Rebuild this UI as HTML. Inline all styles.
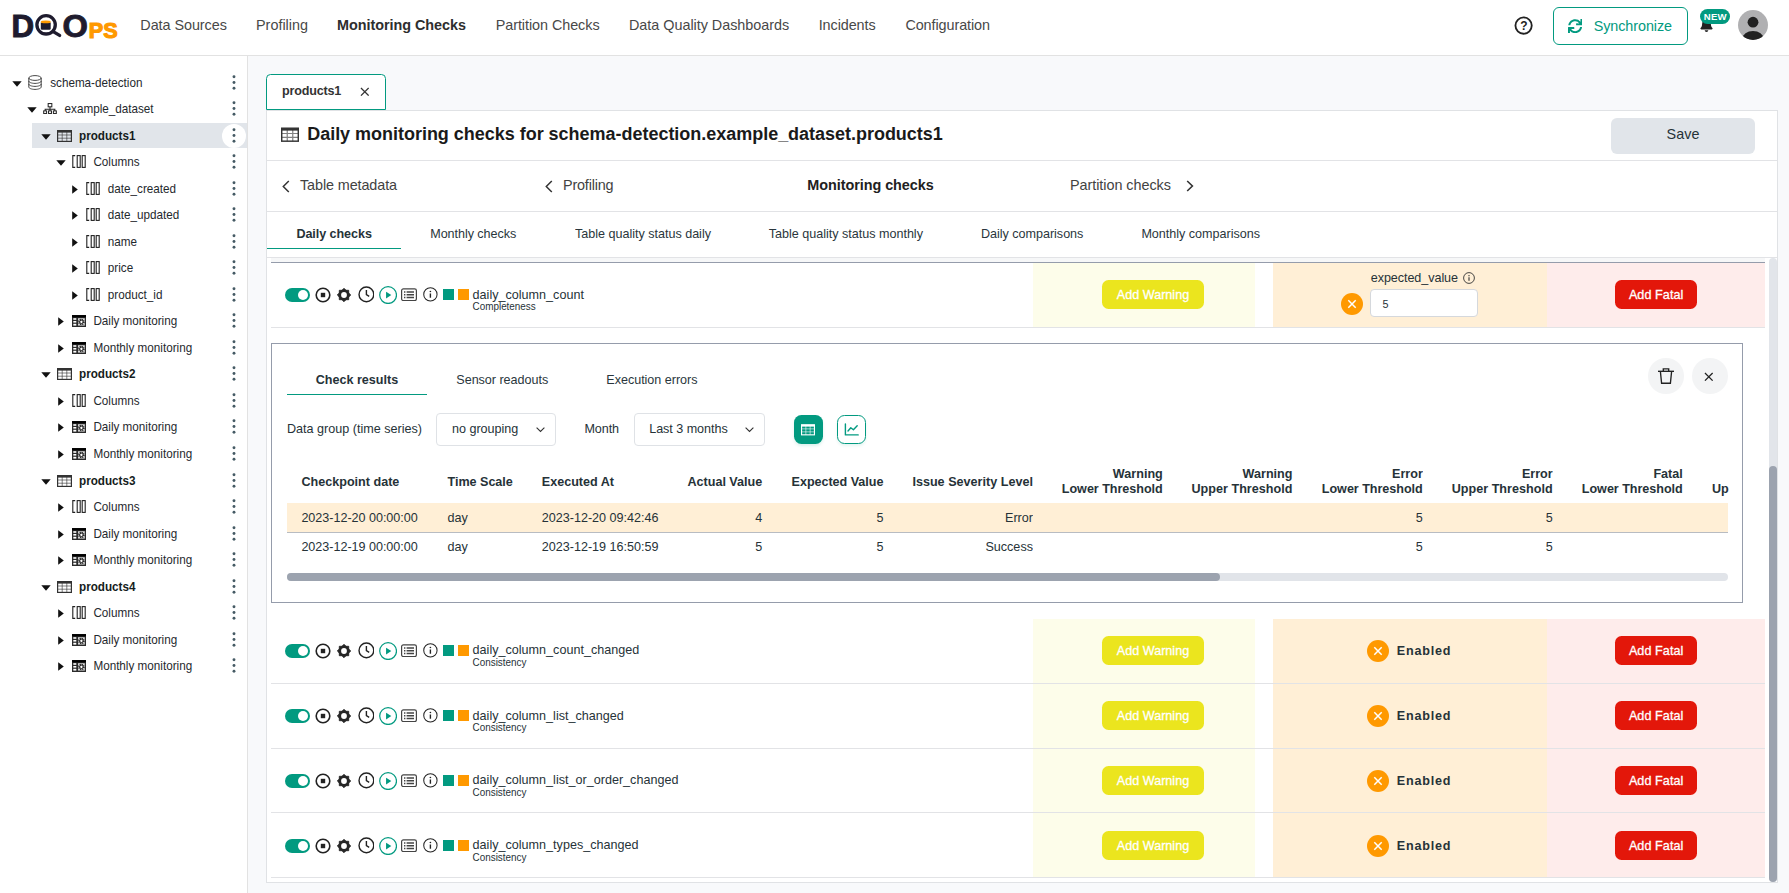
<!DOCTYPE html>
<html lang="en"><head><meta charset="utf-8"><title>DQOps</title>
<style>
html,body{margin:0;padding:0;}
body{width:1789px;height:893px;overflow:hidden;position:relative;background:#fff;font-family:"Liberation Sans",sans-serif;}
.b{position:absolute;box-sizing:border-box;display:block;}
.t{position:absolute;white-space:nowrap;display:block;}
</style></head><body>
<header>
<div class="b " style="left:0.00px;top:0.00px;width:1789.00px;height:56.00px;background:#fff;border-bottom:1px solid #e2e2e2;"></div>
<svg class="b" style="left:0;top:0" width="130" height="55" viewBox="0 0 130 55"><g font-family="Liberation Sans, sans-serif" font-weight="700"><text x="11.4" y="36.8" font-size="31.4" fill="#1e1b2e" stroke="#1e1b2e" stroke-width="1.0" textLength="22.6" lengthAdjust="spacingAndGlyphs">D</text><text x="62.4" y="36.9" font-size="31.4" fill="#1e1b2e" stroke="#1e1b2e" stroke-width="0.9" textLength="25.4" lengthAdjust="spacingAndGlyphs">O</text><text x="88.8" y="37.6" font-size="22.4" fill="#ff9900" stroke="#ff9900" stroke-width="1.2" textLength="28.8" lengthAdjust="spacingAndGlyphs">PS</text></g><circle cx="46.1" cy="24.8" r="9.2" fill="none" stroke="#1e1b2e" stroke-width="3.3"/><path d="M53.2 31.6L59.6 35.4" stroke="#1e1b2e" stroke-width="3.4" stroke-linecap="round"/><path d="M40.8 22.4h9.9v6.2a1.2 1.2 0 0 1-1.2 1.2h-7.5a1.2 1.2 0 0 1-1.2-1.2z" fill="#1e1b2e"/><ellipse cx="45.75" cy="21.9" rx="5" ry="1.4" fill="#ff9900"/></svg>
<span class="t" style="left:140.30px;top:15px;font-size:14.4px;line-height:20px;height:20px;color:#484848;letter-spacing:-0.054px;">Data Sources</span>
<span class="t" style="left:256.00px;top:15px;font-size:14.4px;line-height:20px;height:20px;color:#484848;">Profiling</span>
<span class="t" style="left:337.00px;top:15px;font-size:14.4px;line-height:20px;height:20px;color:#2e2e2e;font-weight:700;letter-spacing:-0.036px;">Monitoring Checks</span>
<span class="t" style="left:495.70px;top:15px;font-size:14.4px;line-height:20px;height:20px;color:#484848;letter-spacing:-0.059px;">Partition Checks</span>
<span class="t" style="left:629.00px;top:15px;font-size:14.4px;line-height:20px;height:20px;color:#484848;letter-spacing:-0.025px;">Data Quality Dashboards</span>
<span class="t" style="left:818.70px;top:15px;font-size:14.4px;line-height:20px;height:20px;color:#484848;letter-spacing:-0.082px;">Incidents</span>
<span class="t" style="left:905.40px;top:15px;font-size:14.4px;line-height:20px;height:20px;color:#484848;letter-spacing:-0.081px;">Configuration</span>
<svg class="b" style="left:1514.40px;top:15.50px;" width="19.2" height="19.2" viewBox="0 0 24 24"><circle cx="12" cy="12" r="10.2" fill="none" stroke="#222" stroke-width="2.3"/><text x="12.3" y="17.7" font-family="Liberation Sans, sans-serif" font-weight="700" font-size="15" text-anchor="middle" fill="#222">?</text></svg>
<div class="b " style="left:1553.00px;top:7.00px;width:135.00px;height:38.00px;border:1px solid #029a80;border-radius:6px;background:#fff;"></div>
<svg class="b" style="left:1568.00px;top:18.60px;" width="14.4" height="14.4" viewBox="0 0 512 512"><path fill="#029a80" d="M440.65 12.57l4 82.77A247.16 247.16 0 0 0 255.83 8C134.73 8 33.91 94.92 12.29 209.82A12 12 0 0 0 24.09 224h49.05a12 12 0 0 0 11.67-9.26 175.91 175.91 0 0 1 317-56.94l-101.46-4.86a12 12 0 0 0-12.57 12v47.41a12 12 0 0 0 12 12H500a12 12 0 0 0 12-12V12a12 12 0 0 0-12-12h-47.37a12 12 0 0 0-11.98 12.57zM255.83 432a175.61 175.61 0 0 1-146-77.8l101.8 4.87a12 12 0 0 0 12.57-12v-47.4a12 12 0 0 0-12-12H12a12 12 0 0 0-12 12V500a12 12 0 0 0 12 12h47.35a12 12 0 0 0 12-12.6l-4.15-82.57A247.17 247.17 0 0 0 255.83 504c121.11 0 221.93-86.92 243.55-201.82a12 12 0 0 0-11.8-14.18h-49.05a12 12 0 0 0-11.67 9.26A175.86 175.86 0 0 1 255.83 432z"/></svg>
<span class="t" style="left:1593.70px;top:16px;font-size:14.4px;line-height:20px;height:20px;color:#029a80;letter-spacing:-0.086px;">Synchronize</span>
<svg class="b" style="left:1699.50px;top:18.00px;" width="13" height="14" viewBox="0 0 448 512"><path fill="#222" d="M224 512c35.32 0 63.97-28.65 63.97-64H160.03c0 35.35 28.65 64 63.97 64zm215.39-149.71c-19.32-20.76-55.47-51.99-55.47-154.29 0-77.7-54.48-139.9-127.94-155.16V32c0-17.67-14.32-32-31.98-32s-31.98 14.33-31.98 32v20.84C118.56 68.1 64.08 130.3 64.08 208c0 102.3-36.15 133.53-55.47 154.29-6 6.45-8.66 14.16-8.61 21.71.11 16.4 12.98 32 32.1 32h383.8c19.12 0 32-15.6 32.1-32 .05-7.55-2.61-15.27-8.61-21.71z"/></svg>
<div class="b " style="left:1700.30px;top:8.80px;width:30.00px;height:15.00px;background:#029a80;border-radius:8px;"></div>
<span class="t" style="left:1703.80px;top:9px;font-size:9.6px;line-height:15px;height:15px;color:#fff;font-weight:700;letter-spacing:0.201px;">NEW</span>
<svg class="b" style="left:1738.00px;top:9.70px;" width="30" height="30" viewBox="0 0 30 30"><defs><clipPath id="av"><circle cx="15" cy="15" r="15"/></clipPath></defs><g clip-path="url(#av)"><rect width="30" height="30" fill="#b0b0b2"/><circle cx="15" cy="12.2" r="5.4" fill="#212121"/><ellipse cx="15" cy="28.5" rx="10.6" ry="7.6" fill="#212121"/></g></svg>
</header>
<aside>
<div class="b " style="left:0.00px;top:56.00px;width:248.00px;height:837.00px;background:#fff;border-right:1px solid #e2e2e2;"></div>
<svg class="b" style="left:12.20px;top:80.50px;" width="10" height="6" viewBox="0 0 10 6"><path d="M0.3 0.2h9.4L5 5.8z" fill="#111"/></svg>
<svg class="b" style="left:28.00px;top:75.00px;" width="14" height="15" viewBox="0 0 14 15"><g fill="none" stroke="#333" stroke-width="0.9"><ellipse cx="7" cy="3" rx="6.2" ry="2.4"/><path d="M0.8 3v9c0 1.3 2.8 2.4 6.2 2.4s6.2-1.1 6.2-2.4V3"/><path d="M0.8 6c0 1.3 2.8 2.4 6.2 2.4s6.2-1.1 6.2-2.4"/><path d="M0.8 9c0 1.3 2.8 2.4 6.2 2.4s6.2-1.1 6.2-2.4"/></g></svg>
<span class="t" style="left:50.20px;top:74px;font-size:11.7px;line-height:17px;height:17px;color:#1f292e;transform:scaleY(1.05);transform-origin:0 13px;">schema-detection</span>
<svg class="b" style="left:232.00px;top:75.00px;" width="4" height="15" viewBox="0 0 4 15"><g fill="#455a64"><circle cx="2" cy="1.8" r="1.45"/><circle cx="2" cy="7.5" r="1.45"/><circle cx="2" cy="13.2" r="1.45"/></g></svg>
<svg class="b" style="left:27.20px;top:106.50px;" width="10" height="6" viewBox="0 0 10 6"><path d="M0.3 0.2h9.4L5 5.8z" fill="#111"/></svg>
<svg class="b" style="left:43.00px;top:103.00px;" width="14" height="11" viewBox="0 0 15 12"><g fill="none" stroke="#222" stroke-width="1.1"><rect x="5.5" y="0.6" width="4" height="3.6"/><path d="M7.5 4.2v2.6M2.2 8.6V6.8h10.6v1.8M7.5 6.8v1.8"/><rect x="0.6" y="8.6" width="3.2" height="2.8"/><rect x="5.9" y="8.6" width="3.2" height="2.8"/><rect x="11.2" y="8.6" width="3.2" height="2.8"/></g></svg>
<span class="t" style="left:64.60px;top:100px;font-size:11.7px;line-height:17px;height:17px;color:#1f292e;transform:scaleY(1.05);transform-origin:0 13px;">example_dataset</span>
<svg class="b" style="left:232.00px;top:101.00px;" width="4" height="15" viewBox="0 0 4 15"><g fill="#455a64"><circle cx="2" cy="1.8" r="1.45"/><circle cx="2" cy="7.5" r="1.45"/><circle cx="2" cy="13.2" r="1.45"/></g></svg>
<div class="b " style="left:32.20px;top:123.00px;width:214.80px;height:24.60px;background:#e1e5ea;"></div>
<div class="b " style="left:222.00px;top:123.50px;width:24.00px;height:24.00px;background:#fff;border-radius:50%;"></div>
<svg class="b" style="left:41.30px;top:133.50px;" width="10" height="6" viewBox="0 0 10 6"><path d="M0.3 0.2h9.4L5 5.8z" fill="#111"/></svg>
<svg class="b" style="left:57.00px;top:129.50px;" width="15" height="12" viewBox="0 0 15 12"><g fill="none" stroke="#333"><rect x="0.6" y="0.6" width="13.8" height="10.8" stroke-width="1.2"/><path d="M0.6 1.6h13.8" stroke-width="2"/><path d="M0.6 5h13.8M0.6 8.2h13.8M5.2 2v9.4M9.8 2v9.4" stroke-width="1" opacity="0.62"/></g></svg>
<span class="t" style="left:79.00px;top:127px;font-size:11.7px;line-height:17px;height:17px;color:#151c20;font-weight:700;transform:scaleY(1.05);transform-origin:0 13px;">products1</span>
<svg class="b" style="left:232.00px;top:128.00px;" width="4" height="15" viewBox="0 0 4 15"><g fill="#455a64"><circle cx="2" cy="1.8" r="1.45"/><circle cx="2" cy="7.5" r="1.45"/><circle cx="2" cy="13.2" r="1.45"/></g></svg>
<svg class="b" style="left:56.20px;top:159.50px;" width="10" height="6" viewBox="0 0 10 6"><path d="M0.3 0.2h9.4L5 5.8z" fill="#111"/></svg>
<svg class="b" style="left:71.80px;top:154.70px;" width="14" height="13" viewBox="0 0 14 13"><g fill="none" stroke="#222" stroke-width="1.1"><path d="M3.2 0.6H0.8v11.8h2.4"/><rect x="5.2" y="0.6" width="3" height="11.8"/><rect x="10.2" y="0.6" width="3" height="11.8"/></g></svg>
<span class="t" style="left:93.40px;top:153px;font-size:11.7px;line-height:17px;height:17px;color:#1f292e;transform:scaleY(1.05);transform-origin:0 13px;">Columns</span>
<svg class="b" style="left:232.00px;top:154.00px;" width="4" height="15" viewBox="0 0 4 15"><g fill="#455a64"><circle cx="2" cy="1.8" r="1.45"/><circle cx="2" cy="7.5" r="1.45"/><circle cx="2" cy="13.2" r="1.45"/></g></svg>
<svg class="b" style="left:72.20px;top:184.60px;" width="6" height="9" viewBox="0 0 6 9"><path d="M0.2 0.2v8.6L5.8 4.5z" fill="#111"/></svg>
<svg class="b" style="left:86.20px;top:181.70px;" width="14" height="13" viewBox="0 0 14 13"><g fill="none" stroke="#222" stroke-width="1.1"><path d="M3.2 0.6H0.8v11.8h2.4"/><rect x="5.2" y="0.6" width="3" height="11.8"/><rect x="10.2" y="0.6" width="3" height="11.8"/></g></svg>
<span class="t" style="left:107.80px;top:180px;font-size:11.7px;line-height:17px;height:17px;color:#1f292e;transform:scaleY(1.05);transform-origin:0 13px;">date_created</span>
<svg class="b" style="left:232.00px;top:181.00px;" width="4" height="15" viewBox="0 0 4 15"><g fill="#455a64"><circle cx="2" cy="1.8" r="1.45"/><circle cx="2" cy="7.5" r="1.45"/><circle cx="2" cy="13.2" r="1.45"/></g></svg>
<svg class="b" style="left:72.20px;top:210.60px;" width="6" height="9" viewBox="0 0 6 9"><path d="M0.2 0.2v8.6L5.8 4.5z" fill="#111"/></svg>
<svg class="b" style="left:86.20px;top:207.70px;" width="14" height="13" viewBox="0 0 14 13"><g fill="none" stroke="#222" stroke-width="1.1"><path d="M3.2 0.6H0.8v11.8h2.4"/><rect x="5.2" y="0.6" width="3" height="11.8"/><rect x="10.2" y="0.6" width="3" height="11.8"/></g></svg>
<span class="t" style="left:107.80px;top:206px;font-size:11.7px;line-height:17px;height:17px;color:#1f292e;transform:scaleY(1.05);transform-origin:0 13px;">date_updated</span>
<svg class="b" style="left:232.00px;top:207.00px;" width="4" height="15" viewBox="0 0 4 15"><g fill="#455a64"><circle cx="2" cy="1.8" r="1.45"/><circle cx="2" cy="7.5" r="1.45"/><circle cx="2" cy="13.2" r="1.45"/></g></svg>
<svg class="b" style="left:72.20px;top:237.60px;" width="6" height="9" viewBox="0 0 6 9"><path d="M0.2 0.2v8.6L5.8 4.5z" fill="#111"/></svg>
<svg class="b" style="left:86.20px;top:234.70px;" width="14" height="13" viewBox="0 0 14 13"><g fill="none" stroke="#222" stroke-width="1.1"><path d="M3.2 0.6H0.8v11.8h2.4"/><rect x="5.2" y="0.6" width="3" height="11.8"/><rect x="10.2" y="0.6" width="3" height="11.8"/></g></svg>
<span class="t" style="left:107.80px;top:233px;font-size:11.7px;line-height:17px;height:17px;color:#1f292e;transform:scaleY(1.05);transform-origin:0 13px;">name</span>
<svg class="b" style="left:232.00px;top:234.00px;" width="4" height="15" viewBox="0 0 4 15"><g fill="#455a64"><circle cx="2" cy="1.8" r="1.45"/><circle cx="2" cy="7.5" r="1.45"/><circle cx="2" cy="13.2" r="1.45"/></g></svg>
<svg class="b" style="left:72.20px;top:263.60px;" width="6" height="9" viewBox="0 0 6 9"><path d="M0.2 0.2v8.6L5.8 4.5z" fill="#111"/></svg>
<svg class="b" style="left:86.20px;top:260.70px;" width="14" height="13" viewBox="0 0 14 13"><g fill="none" stroke="#222" stroke-width="1.1"><path d="M3.2 0.6H0.8v11.8h2.4"/><rect x="5.2" y="0.6" width="3" height="11.8"/><rect x="10.2" y="0.6" width="3" height="11.8"/></g></svg>
<span class="t" style="left:107.80px;top:259px;font-size:11.7px;line-height:17px;height:17px;color:#1f292e;transform:scaleY(1.05);transform-origin:0 13px;">price</span>
<svg class="b" style="left:232.00px;top:260.00px;" width="4" height="15" viewBox="0 0 4 15"><g fill="#455a64"><circle cx="2" cy="1.8" r="1.45"/><circle cx="2" cy="7.5" r="1.45"/><circle cx="2" cy="13.2" r="1.45"/></g></svg>
<svg class="b" style="left:72.20px;top:290.60px;" width="6" height="9" viewBox="0 0 6 9"><path d="M0.2 0.2v8.6L5.8 4.5z" fill="#111"/></svg>
<svg class="b" style="left:86.20px;top:287.70px;" width="14" height="13" viewBox="0 0 14 13"><g fill="none" stroke="#222" stroke-width="1.1"><path d="M3.2 0.6H0.8v11.8h2.4"/><rect x="5.2" y="0.6" width="3" height="11.8"/><rect x="10.2" y="0.6" width="3" height="11.8"/></g></svg>
<span class="t" style="left:107.80px;top:286px;font-size:11.7px;line-height:17px;height:17px;color:#1f292e;transform:scaleY(1.05);transform-origin:0 13px;">product_id</span>
<svg class="b" style="left:232.00px;top:287.00px;" width="4" height="15" viewBox="0 0 4 15"><g fill="#455a64"><circle cx="2" cy="1.8" r="1.45"/><circle cx="2" cy="7.5" r="1.45"/><circle cx="2" cy="13.2" r="1.45"/></g></svg>
<svg class="b" style="left:58.20px;top:316.60px;" width="6" height="9" viewBox="0 0 6 9"><path d="M0.2 0.2v8.6L5.8 4.5z" fill="#111"/></svg>
<svg class="b" style="left:72.00px;top:314.80px;" width="14" height="12.2" viewBox="0 0 14 12"><rect x="0" y="0" width="14" height="12" fill="#2b2b2b"/><rect x="0" y="0" width="14" height="2.3" fill="#000"/><g fill="#fff"><rect x="1.3" y="3.1" width="3" height="1.6"/><rect x="1.3" y="5.9" width="3" height="1.6"/><rect x="1.3" y="8.7" width="3" height="1.8"/><rect x="6" y="3.1" width="6.8" height="7.4" opacity="0.8"/></g><circle cx="9.4" cy="6.8" r="2.5" fill="none" stroke="#1a1a1a" stroke-width="1.5" stroke-dasharray="1.1 0.86"/><circle cx="9.4" cy="6.8" r="1.7" fill="#fff" stroke="#1a1a1a" stroke-width="1"/></svg>
<span class="t" style="left:93.40px;top:312px;font-size:11.7px;line-height:17px;height:17px;color:#1f292e;transform:scaleY(1.05);transform-origin:0 13px;">Daily monitoring</span>
<svg class="b" style="left:232.00px;top:313.00px;" width="4" height="15" viewBox="0 0 4 15"><g fill="#455a64"><circle cx="2" cy="1.8" r="1.45"/><circle cx="2" cy="7.5" r="1.45"/><circle cx="2" cy="13.2" r="1.45"/></g></svg>
<svg class="b" style="left:58.20px;top:343.60px;" width="6" height="9" viewBox="0 0 6 9"><path d="M0.2 0.2v8.6L5.8 4.5z" fill="#111"/></svg>
<svg class="b" style="left:72.00px;top:341.80px;" width="14" height="12.2" viewBox="0 0 14 12"><rect x="0" y="0" width="14" height="12" fill="#2b2b2b"/><rect x="0" y="0" width="14" height="2.3" fill="#000"/><g fill="#fff"><rect x="1.3" y="3.1" width="3" height="1.6"/><rect x="1.3" y="5.9" width="3" height="1.6"/><rect x="1.3" y="8.7" width="3" height="1.8"/><rect x="6" y="3.1" width="6.8" height="7.4" opacity="0.8"/></g><circle cx="9.4" cy="6.8" r="2.5" fill="none" stroke="#1a1a1a" stroke-width="1.5" stroke-dasharray="1.1 0.86"/><circle cx="9.4" cy="6.8" r="1.7" fill="#fff" stroke="#1a1a1a" stroke-width="1"/></svg>
<span class="t" style="left:93.40px;top:339px;font-size:11.7px;line-height:17px;height:17px;color:#1f292e;transform:scaleY(1.05);transform-origin:0 13px;">Monthly monitoring</span>
<svg class="b" style="left:232.00px;top:340.00px;" width="4" height="15" viewBox="0 0 4 15"><g fill="#455a64"><circle cx="2" cy="1.8" r="1.45"/><circle cx="2" cy="7.5" r="1.45"/><circle cx="2" cy="13.2" r="1.45"/></g></svg>
<svg class="b" style="left:41.30px;top:371.50px;" width="10" height="6" viewBox="0 0 10 6"><path d="M0.3 0.2h9.4L5 5.8z" fill="#111"/></svg>
<svg class="b" style="left:57.00px;top:367.50px;" width="15" height="12" viewBox="0 0 15 12"><g fill="none" stroke="#333"><rect x="0.6" y="0.6" width="13.8" height="10.8" stroke-width="1.2"/><path d="M0.6 1.6h13.8" stroke-width="2"/><path d="M0.6 5h13.8M0.6 8.2h13.8M5.2 2v9.4M9.8 2v9.4" stroke-width="1" opacity="0.62"/></g></svg>
<span class="t" style="left:79.00px;top:365px;font-size:11.7px;line-height:17px;height:17px;color:#151c20;font-weight:700;transform:scaleY(1.05);transform-origin:0 13px;">products2</span>
<svg class="b" style="left:232.00px;top:366.00px;" width="4" height="15" viewBox="0 0 4 15"><g fill="#455a64"><circle cx="2" cy="1.8" r="1.45"/><circle cx="2" cy="7.5" r="1.45"/><circle cx="2" cy="13.2" r="1.45"/></g></svg>
<svg class="b" style="left:58.20px;top:396.60px;" width="6" height="9" viewBox="0 0 6 9"><path d="M0.2 0.2v8.6L5.8 4.5z" fill="#111"/></svg>
<svg class="b" style="left:71.80px;top:393.70px;" width="14" height="13" viewBox="0 0 14 13"><g fill="none" stroke="#222" stroke-width="1.1"><path d="M3.2 0.6H0.8v11.8h2.4"/><rect x="5.2" y="0.6" width="3" height="11.8"/><rect x="10.2" y="0.6" width="3" height="11.8"/></g></svg>
<span class="t" style="left:93.40px;top:392px;font-size:11.7px;line-height:17px;height:17px;color:#1f292e;transform:scaleY(1.05);transform-origin:0 13px;">Columns</span>
<svg class="b" style="left:232.00px;top:393.00px;" width="4" height="15" viewBox="0 0 4 15"><g fill="#455a64"><circle cx="2" cy="1.8" r="1.45"/><circle cx="2" cy="7.5" r="1.45"/><circle cx="2" cy="13.2" r="1.45"/></g></svg>
<svg class="b" style="left:58.20px;top:422.60px;" width="6" height="9" viewBox="0 0 6 9"><path d="M0.2 0.2v8.6L5.8 4.5z" fill="#111"/></svg>
<svg class="b" style="left:72.00px;top:420.80px;" width="14" height="12.2" viewBox="0 0 14 12"><rect x="0" y="0" width="14" height="12" fill="#2b2b2b"/><rect x="0" y="0" width="14" height="2.3" fill="#000"/><g fill="#fff"><rect x="1.3" y="3.1" width="3" height="1.6"/><rect x="1.3" y="5.9" width="3" height="1.6"/><rect x="1.3" y="8.7" width="3" height="1.8"/><rect x="6" y="3.1" width="6.8" height="7.4" opacity="0.8"/></g><circle cx="9.4" cy="6.8" r="2.5" fill="none" stroke="#1a1a1a" stroke-width="1.5" stroke-dasharray="1.1 0.86"/><circle cx="9.4" cy="6.8" r="1.7" fill="#fff" stroke="#1a1a1a" stroke-width="1"/></svg>
<span class="t" style="left:93.40px;top:418px;font-size:11.7px;line-height:17px;height:17px;color:#1f292e;transform:scaleY(1.05);transform-origin:0 13px;">Daily monitoring</span>
<svg class="b" style="left:232.00px;top:419.00px;" width="4" height="15" viewBox="0 0 4 15"><g fill="#455a64"><circle cx="2" cy="1.8" r="1.45"/><circle cx="2" cy="7.5" r="1.45"/><circle cx="2" cy="13.2" r="1.45"/></g></svg>
<svg class="b" style="left:58.20px;top:449.60px;" width="6" height="9" viewBox="0 0 6 9"><path d="M0.2 0.2v8.6L5.8 4.5z" fill="#111"/></svg>
<svg class="b" style="left:72.00px;top:447.80px;" width="14" height="12.2" viewBox="0 0 14 12"><rect x="0" y="0" width="14" height="12" fill="#2b2b2b"/><rect x="0" y="0" width="14" height="2.3" fill="#000"/><g fill="#fff"><rect x="1.3" y="3.1" width="3" height="1.6"/><rect x="1.3" y="5.9" width="3" height="1.6"/><rect x="1.3" y="8.7" width="3" height="1.8"/><rect x="6" y="3.1" width="6.8" height="7.4" opacity="0.8"/></g><circle cx="9.4" cy="6.8" r="2.5" fill="none" stroke="#1a1a1a" stroke-width="1.5" stroke-dasharray="1.1 0.86"/><circle cx="9.4" cy="6.8" r="1.7" fill="#fff" stroke="#1a1a1a" stroke-width="1"/></svg>
<span class="t" style="left:93.40px;top:445px;font-size:11.7px;line-height:17px;height:17px;color:#1f292e;transform:scaleY(1.05);transform-origin:0 13px;">Monthly monitoring</span>
<svg class="b" style="left:232.00px;top:446.00px;" width="4" height="15" viewBox="0 0 4 15"><g fill="#455a64"><circle cx="2" cy="1.8" r="1.45"/><circle cx="2" cy="7.5" r="1.45"/><circle cx="2" cy="13.2" r="1.45"/></g></svg>
<svg class="b" style="left:41.30px;top:478.50px;" width="10" height="6" viewBox="0 0 10 6"><path d="M0.3 0.2h9.4L5 5.8z" fill="#111"/></svg>
<svg class="b" style="left:57.00px;top:474.50px;" width="15" height="12" viewBox="0 0 15 12"><g fill="none" stroke="#333"><rect x="0.6" y="0.6" width="13.8" height="10.8" stroke-width="1.2"/><path d="M0.6 1.6h13.8" stroke-width="2"/><path d="M0.6 5h13.8M0.6 8.2h13.8M5.2 2v9.4M9.8 2v9.4" stroke-width="1" opacity="0.62"/></g></svg>
<span class="t" style="left:79.00px;top:472px;font-size:11.7px;line-height:17px;height:17px;color:#151c20;font-weight:700;transform:scaleY(1.05);transform-origin:0 13px;">products3</span>
<svg class="b" style="left:232.00px;top:473.00px;" width="4" height="15" viewBox="0 0 4 15"><g fill="#455a64"><circle cx="2" cy="1.8" r="1.45"/><circle cx="2" cy="7.5" r="1.45"/><circle cx="2" cy="13.2" r="1.45"/></g></svg>
<svg class="b" style="left:58.20px;top:502.60px;" width="6" height="9" viewBox="0 0 6 9"><path d="M0.2 0.2v8.6L5.8 4.5z" fill="#111"/></svg>
<svg class="b" style="left:71.80px;top:499.70px;" width="14" height="13" viewBox="0 0 14 13"><g fill="none" stroke="#222" stroke-width="1.1"><path d="M3.2 0.6H0.8v11.8h2.4"/><rect x="5.2" y="0.6" width="3" height="11.8"/><rect x="10.2" y="0.6" width="3" height="11.8"/></g></svg>
<span class="t" style="left:93.40px;top:498px;font-size:11.7px;line-height:17px;height:17px;color:#1f292e;transform:scaleY(1.05);transform-origin:0 13px;">Columns</span>
<svg class="b" style="left:232.00px;top:499.00px;" width="4" height="15" viewBox="0 0 4 15"><g fill="#455a64"><circle cx="2" cy="1.8" r="1.45"/><circle cx="2" cy="7.5" r="1.45"/><circle cx="2" cy="13.2" r="1.45"/></g></svg>
<svg class="b" style="left:58.20px;top:529.60px;" width="6" height="9" viewBox="0 0 6 9"><path d="M0.2 0.2v8.6L5.8 4.5z" fill="#111"/></svg>
<svg class="b" style="left:72.00px;top:527.80px;" width="14" height="12.2" viewBox="0 0 14 12"><rect x="0" y="0" width="14" height="12" fill="#2b2b2b"/><rect x="0" y="0" width="14" height="2.3" fill="#000"/><g fill="#fff"><rect x="1.3" y="3.1" width="3" height="1.6"/><rect x="1.3" y="5.9" width="3" height="1.6"/><rect x="1.3" y="8.7" width="3" height="1.8"/><rect x="6" y="3.1" width="6.8" height="7.4" opacity="0.8"/></g><circle cx="9.4" cy="6.8" r="2.5" fill="none" stroke="#1a1a1a" stroke-width="1.5" stroke-dasharray="1.1 0.86"/><circle cx="9.4" cy="6.8" r="1.7" fill="#fff" stroke="#1a1a1a" stroke-width="1"/></svg>
<span class="t" style="left:93.40px;top:525px;font-size:11.7px;line-height:17px;height:17px;color:#1f292e;transform:scaleY(1.05);transform-origin:0 13px;">Daily monitoring</span>
<svg class="b" style="left:232.00px;top:526.00px;" width="4" height="15" viewBox="0 0 4 15"><g fill="#455a64"><circle cx="2" cy="1.8" r="1.45"/><circle cx="2" cy="7.5" r="1.45"/><circle cx="2" cy="13.2" r="1.45"/></g></svg>
<svg class="b" style="left:58.20px;top:555.60px;" width="6" height="9" viewBox="0 0 6 9"><path d="M0.2 0.2v8.6L5.8 4.5z" fill="#111"/></svg>
<svg class="b" style="left:72.00px;top:553.80px;" width="14" height="12.2" viewBox="0 0 14 12"><rect x="0" y="0" width="14" height="12" fill="#2b2b2b"/><rect x="0" y="0" width="14" height="2.3" fill="#000"/><g fill="#fff"><rect x="1.3" y="3.1" width="3" height="1.6"/><rect x="1.3" y="5.9" width="3" height="1.6"/><rect x="1.3" y="8.7" width="3" height="1.8"/><rect x="6" y="3.1" width="6.8" height="7.4" opacity="0.8"/></g><circle cx="9.4" cy="6.8" r="2.5" fill="none" stroke="#1a1a1a" stroke-width="1.5" stroke-dasharray="1.1 0.86"/><circle cx="9.4" cy="6.8" r="1.7" fill="#fff" stroke="#1a1a1a" stroke-width="1"/></svg>
<span class="t" style="left:93.40px;top:551px;font-size:11.7px;line-height:17px;height:17px;color:#1f292e;transform:scaleY(1.05);transform-origin:0 13px;">Monthly monitoring</span>
<svg class="b" style="left:232.00px;top:552.00px;" width="4" height="15" viewBox="0 0 4 15"><g fill="#455a64"><circle cx="2" cy="1.8" r="1.45"/><circle cx="2" cy="7.5" r="1.45"/><circle cx="2" cy="13.2" r="1.45"/></g></svg>
<svg class="b" style="left:41.30px;top:584.50px;" width="10" height="6" viewBox="0 0 10 6"><path d="M0.3 0.2h9.4L5 5.8z" fill="#111"/></svg>
<svg class="b" style="left:57.00px;top:580.50px;" width="15" height="12" viewBox="0 0 15 12"><g fill="none" stroke="#333"><rect x="0.6" y="0.6" width="13.8" height="10.8" stroke-width="1.2"/><path d="M0.6 1.6h13.8" stroke-width="2"/><path d="M0.6 5h13.8M0.6 8.2h13.8M5.2 2v9.4M9.8 2v9.4" stroke-width="1" opacity="0.62"/></g></svg>
<span class="t" style="left:79.00px;top:578px;font-size:11.7px;line-height:17px;height:17px;color:#151c20;font-weight:700;transform:scaleY(1.05);transform-origin:0 13px;">products4</span>
<svg class="b" style="left:232.00px;top:579.00px;" width="4" height="15" viewBox="0 0 4 15"><g fill="#455a64"><circle cx="2" cy="1.8" r="1.45"/><circle cx="2" cy="7.5" r="1.45"/><circle cx="2" cy="13.2" r="1.45"/></g></svg>
<svg class="b" style="left:58.20px;top:608.60px;" width="6" height="9" viewBox="0 0 6 9"><path d="M0.2 0.2v8.6L5.8 4.5z" fill="#111"/></svg>
<svg class="b" style="left:71.80px;top:605.70px;" width="14" height="13" viewBox="0 0 14 13"><g fill="none" stroke="#222" stroke-width="1.1"><path d="M3.2 0.6H0.8v11.8h2.4"/><rect x="5.2" y="0.6" width="3" height="11.8"/><rect x="10.2" y="0.6" width="3" height="11.8"/></g></svg>
<span class="t" style="left:93.40px;top:604px;font-size:11.7px;line-height:17px;height:17px;color:#1f292e;transform:scaleY(1.05);transform-origin:0 13px;">Columns</span>
<svg class="b" style="left:232.00px;top:605.00px;" width="4" height="15" viewBox="0 0 4 15"><g fill="#455a64"><circle cx="2" cy="1.8" r="1.45"/><circle cx="2" cy="7.5" r="1.45"/><circle cx="2" cy="13.2" r="1.45"/></g></svg>
<svg class="b" style="left:58.20px;top:635.60px;" width="6" height="9" viewBox="0 0 6 9"><path d="M0.2 0.2v8.6L5.8 4.5z" fill="#111"/></svg>
<svg class="b" style="left:72.00px;top:633.80px;" width="14" height="12.2" viewBox="0 0 14 12"><rect x="0" y="0" width="14" height="12" fill="#2b2b2b"/><rect x="0" y="0" width="14" height="2.3" fill="#000"/><g fill="#fff"><rect x="1.3" y="3.1" width="3" height="1.6"/><rect x="1.3" y="5.9" width="3" height="1.6"/><rect x="1.3" y="8.7" width="3" height="1.8"/><rect x="6" y="3.1" width="6.8" height="7.4" opacity="0.8"/></g><circle cx="9.4" cy="6.8" r="2.5" fill="none" stroke="#1a1a1a" stroke-width="1.5" stroke-dasharray="1.1 0.86"/><circle cx="9.4" cy="6.8" r="1.7" fill="#fff" stroke="#1a1a1a" stroke-width="1"/></svg>
<span class="t" style="left:93.40px;top:631px;font-size:11.7px;line-height:17px;height:17px;color:#1f292e;transform:scaleY(1.05);transform-origin:0 13px;">Daily monitoring</span>
<svg class="b" style="left:232.00px;top:632.00px;" width="4" height="15" viewBox="0 0 4 15"><g fill="#455a64"><circle cx="2" cy="1.8" r="1.45"/><circle cx="2" cy="7.5" r="1.45"/><circle cx="2" cy="13.2" r="1.45"/></g></svg>
<svg class="b" style="left:58.20px;top:661.60px;" width="6" height="9" viewBox="0 0 6 9"><path d="M0.2 0.2v8.6L5.8 4.5z" fill="#111"/></svg>
<svg class="b" style="left:72.00px;top:659.80px;" width="14" height="12.2" viewBox="0 0 14 12"><rect x="0" y="0" width="14" height="12" fill="#2b2b2b"/><rect x="0" y="0" width="14" height="2.3" fill="#000"/><g fill="#fff"><rect x="1.3" y="3.1" width="3" height="1.6"/><rect x="1.3" y="5.9" width="3" height="1.6"/><rect x="1.3" y="8.7" width="3" height="1.8"/><rect x="6" y="3.1" width="6.8" height="7.4" opacity="0.8"/></g><circle cx="9.4" cy="6.8" r="2.5" fill="none" stroke="#1a1a1a" stroke-width="1.5" stroke-dasharray="1.1 0.86"/><circle cx="9.4" cy="6.8" r="1.7" fill="#fff" stroke="#1a1a1a" stroke-width="1"/></svg>
<span class="t" style="left:93.40px;top:657px;font-size:11.7px;line-height:17px;height:17px;color:#1f292e;transform:scaleY(1.05);transform-origin:0 13px;">Monthly monitoring</span>
<svg class="b" style="left:232.00px;top:658.00px;" width="4" height="15" viewBox="0 0 4 15"><g fill="#455a64"><circle cx="2" cy="1.8" r="1.45"/><circle cx="2" cy="7.5" r="1.45"/><circle cx="2" cy="13.2" r="1.45"/></g></svg>
</aside>
<main>
<div class="b " style="left:248.00px;top:56.00px;width:1541.00px;height:837.00px;background:#f8f9fb;"></div>
<div class="b " style="left:266.00px;top:110.00px;width:1512.00px;height:773.00px;background:#fff;border:1px solid #e0e2e5;"></div>
<div class="b " style="left:266.00px;top:74.00px;width:120.00px;height:36.00px;background:#fff;border:1px solid #029a80;border-radius:4.5px 4.5px 0 0;"></div>
<span class="t" style="left:282.10px;top:82px;font-size:12.6px;line-height:18px;height:18px;color:#333;font-weight:700;letter-spacing:-0.223px;transform:scaleY(1.08);transform-origin:0 13px;">products1</span>
<svg class="b" style="left:359.60px;top:86.60px;" width="9.6" height="9.6" viewBox="0 0 10 10"><path d="M1 1l8 8M9 1l-8 8" stroke="#333" stroke-width="1.3" fill="none"/></svg>
<svg class="b" style="left:281.00px;top:127.30px;" width="18" height="15.4" viewBox="0 0 15 12"><g fill="none" stroke="#333"><rect x="0.6" y="0.6" width="13.8" height="10.8" stroke-width="1.2"/><path d="M0.6 1.6h13.8" stroke-width="2"/><path d="M0.6 5h13.8M0.6 8.2h13.8M5.2 2v9.4M9.8 2v9.4" stroke-width="1" opacity="0.62"/></g></svg>
<span class="t" style="left:307.20px;top:122px;font-size:18px;line-height:24px;height:24px;color:#1a1a1a;font-weight:700;letter-spacing:-0.023px;">Daily monitoring checks for schema-detection.example_dataset.products1</span>
<div class="b " style="left:1611.00px;top:118.00px;width:144.00px;height:36.00px;background:#e1e5ea;border-radius:6px;"></div>
<span class="t" style="left:1666.59px;top:124px;font-size:14.4px;line-height:20px;height:20px;color:#263238;">Save</span>
<div class="b " style="left:267.00px;top:160.00px;width:1510.00px;height:1.00px;background:#e2e3e6;"></div>
<svg class="b" style="left:281.60px;top:179.70px;" width="8" height="13" viewBox="0 0 8 13"><path d="M6.8 1L1.3 6.5L6.8 12" fill="none" stroke="#333" stroke-width="1.5"/></svg>
<span class="t" style="left:300.00px;top:175px;font-size:14.4px;line-height:20px;height:20px;color:#424242;letter-spacing:-0.105px;">Table metadata</span>
<svg class="b" style="left:544.80px;top:179.70px;" width="8" height="13" viewBox="0 0 8 13"><path d="M6.8 1L1.3 6.5L6.8 12" fill="none" stroke="#333" stroke-width="1.5"/></svg>
<span class="t" style="left:563.00px;top:175px;font-size:14.4px;line-height:20px;height:20px;color:#424242;letter-spacing:-0.181px;">Profiling</span>
<span class="t" style="left:807.30px;top:175px;font-size:14.4px;line-height:20px;height:20px;color:#212121;font-weight:700;letter-spacing:-0.042px;">Monitoring checks</span>
<span class="t" style="left:1070.00px;top:175px;font-size:14.4px;line-height:20px;height:20px;color:#424242;letter-spacing:-0.047px;">Partition checks</span>
<svg class="b" style="left:1186.00px;top:179.80px;" width="8" height="12" viewBox="0 0 8 12"><path d="M1.2 1L6.4 6L1.2 11" fill="none" stroke="#333" stroke-width="1.6"/></svg>
<div class="b " style="left:267.00px;top:211.00px;width:1510.00px;height:1.00px;background:#e2e3e6;"></div>
<span class="t" style="left:296.40px;top:225px;font-size:12.6px;line-height:18px;height:18px;color:#263238;font-weight:700;letter-spacing:-0.071px;transform:scaleY(1.08);transform-origin:0 13px;">Daily checks</span>
<span class="t" style="left:430.20px;top:225px;font-size:12.6px;line-height:18px;height:18px;color:#2a363c;letter-spacing:-0.052px;transform:scaleY(1.08);transform-origin:0 13px;">Monthly checks</span>
<span class="t" style="left:575.00px;top:225px;font-size:12.6px;line-height:18px;height:18px;color:#2a363c;letter-spacing:-0.022px;transform:scaleY(1.08);transform-origin:0 13px;">Table quality status daily</span>
<span class="t" style="left:768.80px;top:225px;font-size:12.6px;line-height:18px;height:18px;color:#2a363c;letter-spacing:-0.021px;transform:scaleY(1.08);transform-origin:0 13px;">Table quality status monthly</span>
<span class="t" style="left:981.00px;top:225px;font-size:12.6px;line-height:18px;height:18px;color:#2a363c;letter-spacing:-0.032px;transform:scaleY(1.08);transform-origin:0 13px;">Daily comparisons</span>
<span class="t" style="left:1141.40px;top:225px;font-size:12.6px;line-height:18px;height:18px;color:#2a363c;letter-spacing:-0.018px;transform:scaleY(1.08);transform-origin:0 13px;">Monthly comparisons</span>
<div class="b " style="left:267.00px;top:248.00px;width:134.00px;height:1.00px;background:#029a80;"></div>
<div class="b " style="left:267.00px;top:257.00px;width:1510.00px;height:1.00px;background:#e2e3e6;"></div>
<div class="b " style="left:1769.00px;top:258.00px;width:8.00px;height:623.60px;background:#e2e5ea;border-radius:4px;"></div>
<div class="b " style="left:1769.00px;top:466.00px;width:8.00px;height:415.60px;background:#9ca3af;border-radius:4px;"></div>
<div class="b " style="left:271.00px;top:258.00px;width:1494.00px;height:4.00px;background:#f6f7f8;"></div>
<div class="b " style="left:1033.00px;top:263.00px;width:222.00px;height:64.00px;background:#fdfdea;"></div>
<div class="b " style="left:1273.00px;top:263.00px;width:274.00px;height:64.00px;background:#ffefd6;"></div>
<div class="b " style="left:1547.00px;top:263.00px;width:218.40px;height:64.00px;background:#feeceb;"></div>
<div class="b " style="left:284.80px;top:288.30px;width:25.20px;height:13.60px;background:#029a80;border-radius:7px;"></div>
<div class="b " style="left:297.70px;top:289.70px;width:10.80px;height:10.80px;background:#fff;border-radius:50%;"></div>
<svg class="b" style="left:314.90px;top:287.00px;" width="16" height="16" viewBox="0 0 16 16"><circle cx="8" cy="8" r="6.8" fill="none" stroke="#222" stroke-width="1.6"/><rect x="5.8" y="5.8" width="4.4" height="4.4" fill="#222"/></svg>
<svg class="b" style="left:336.00px;top:287.00px;" width="16" height="16" viewBox="-8 -8 16 16"><g fill="#262626" stroke="#262626" stroke-width="0.9" stroke-linejoin="round"><rect x="-4.7" y="-4.7" width="9.4" height="9.4"/><rect x="-4.7" y="-4.7" width="9.4" height="9.4" transform="rotate(45)"/></g><circle cx="0" cy="0" r="2.9" fill="#fff"/></svg>
<svg class="b" style="left:357.50px;top:286.30px;" width="16.8" height="16.8" viewBox="0 0 18 18"><circle cx="9" cy="9" r="7.9" fill="none" stroke="#222" stroke-width="1.5"/><path d="M9 4.4V9.3l3 1.8" fill="none" stroke="#222" stroke-width="1.5"/></svg>
<svg class="b" style="left:378.70px;top:285.80px;" width="18.2" height="18.2" viewBox="0 0 18 18"><circle cx="9" cy="9" r="8.3" fill="none" stroke="#029a80" stroke-width="1.2"/><path d="M7 5.6v6.8L12.2 9z" fill="#029a80"/></svg>
<svg class="b" style="left:401.10px;top:287.70px;" width="16" height="13.4" viewBox="0 0 16 13"><rect x="0.6" y="0.6" width="14.8" height="11.8" rx="1.8" fill="none" stroke="#444" stroke-width="1.2"/><g stroke="#444" stroke-width="1.5"><path d="M3 3.8h1.4M5.6 3.8h7.4M3 6.5h1.4M5.6 6.5h7.4M3 9.2h1.4M5.6 9.2h7.4"/></g></svg>
<svg class="b" style="left:423.40px;top:286.90px;" width="14.8" height="14.8" viewBox="0 0 16 16"><circle cx="8" cy="8" r="7.2" fill="none" stroke="#222" stroke-width="1.1"/><circle cx="8" cy="4.9" r="0.9" fill="#222"/><path d="M8 7v4.6" stroke="#222" stroke-width="1.5"/></svg>
<div class="b " style="left:443.00px;top:289.00px;width:11.00px;height:11.00px;background:#029a80;"></div>
<div class="b " style="left:458.00px;top:289.00px;width:11.00px;height:11.00px;background:#ff9900;"></div>
<span class="t" style="left:472.60px;top:286px;font-size:12.6px;line-height:18px;height:18px;color:#263238;transform:scaleY(1.08);transform-origin:0 13px;">daily_column_count</span>
<span class="t" style="left:472.60px;top:299px;font-size:9.9px;line-height:15px;height:15px;color:#263238;transform:scaleY(1.12);transform-origin:0 11px;">Completeness</span>
<div class="b " style="left:1102.00px;top:280.00px;width:102.00px;height:29.00px;background:#ebe51e;border-radius:6.5px;"></div>
<span class="t" style="left:1116.75px;top:286px;font-size:12.6px;line-height:18px;height:18px;color:#fff;letter-spacing:0.012px;transform:scaleY(1.08);transform-origin:0 13px;-webkit-text-stroke:0.3px #fff;">Add Warning</span>
<div class="b " style="left:1615.20px;top:280.00px;width:82.00px;height:29.00px;background:#e3170a;border-radius:6.5px;"></div>
<span class="t" style="left:1628.90px;top:286px;font-size:12.6px;line-height:18px;height:18px;color:#fff;letter-spacing:0.074px;transform:scaleY(1.08);transform-origin:0 13px;-webkit-text-stroke:0.3px #fff;">Add Fatal</span>
<svg class="b" style="left:1341.00px;top:293.00px;" width="22" height="22" viewBox="0 0 22 22"><circle cx="11" cy="11" r="11" fill="#ff9900"/><path d="M7.3 7.3l7.4 7.4M14.7 7.3l-7.4 7.4" stroke="#fff" stroke-width="1.5" fill="none"/></svg>
<span class="t" style="left:1370.80px;top:269px;font-size:12.6px;line-height:18px;height:18px;color:#263238;letter-spacing:-0.076px;transform:scaleY(1.08);transform-origin:0 13px;">expected_value</span>
<svg class="b" style="left:1463.00px;top:272.00px;" width="12" height="12" viewBox="0 0 16 16"><circle cx="8" cy="8" r="7.2" fill="none" stroke="#333" stroke-width="1.2"/><circle cx="8" cy="4.9" r="0.9" fill="#333"/><path d="M8 7v4.6" stroke="#333" stroke-width="1.5"/></svg>
<div class="b " style="left:1370.20px;top:289.40px;width:107.50px;height:28.00px;background:#fff;border:1px solid #d5d8dc;border-radius:4px;"></div>
<span class="t" style="left:1382.40px;top:296px;font-size:10.8px;line-height:16px;height:16px;color:#263238;">5</span>
<div class="b " style="left:271.00px;top:327.00px;width:1494.00px;height:1.00px;background:#e2e3e6;"></div>
<div class="b " style="left:1033.00px;top:619.00px;width:222.00px;height:64.00px;background:#fdfdea;"></div>
<div class="b " style="left:1273.00px;top:619.00px;width:274.00px;height:64.00px;background:#ffefd6;"></div>
<div class="b " style="left:1547.00px;top:619.00px;width:218.40px;height:64.00px;background:#feeceb;"></div>
<div class="b " style="left:284.80px;top:644.30px;width:25.20px;height:13.60px;background:#029a80;border-radius:7px;"></div>
<div class="b " style="left:297.70px;top:645.70px;width:10.80px;height:10.80px;background:#fff;border-radius:50%;"></div>
<svg class="b" style="left:314.90px;top:643.00px;" width="16" height="16" viewBox="0 0 16 16"><circle cx="8" cy="8" r="6.8" fill="none" stroke="#222" stroke-width="1.6"/><rect x="5.8" y="5.8" width="4.4" height="4.4" fill="#222"/></svg>
<svg class="b" style="left:336.00px;top:643.00px;" width="16" height="16" viewBox="-8 -8 16 16"><g fill="#262626" stroke="#262626" stroke-width="0.9" stroke-linejoin="round"><rect x="-4.7" y="-4.7" width="9.4" height="9.4"/><rect x="-4.7" y="-4.7" width="9.4" height="9.4" transform="rotate(45)"/></g><circle cx="0" cy="0" r="2.9" fill="#fff"/></svg>
<svg class="b" style="left:357.50px;top:642.30px;" width="16.8" height="16.8" viewBox="0 0 18 18"><circle cx="9" cy="9" r="7.9" fill="none" stroke="#222" stroke-width="1.5"/><path d="M9 4.4V9.3l3 1.8" fill="none" stroke="#222" stroke-width="1.5"/></svg>
<svg class="b" style="left:378.70px;top:641.80px;" width="18.2" height="18.2" viewBox="0 0 18 18"><circle cx="9" cy="9" r="8.3" fill="none" stroke="#029a80" stroke-width="1.2"/><path d="M7 5.6v6.8L12.2 9z" fill="#029a80"/></svg>
<svg class="b" style="left:401.10px;top:643.70px;" width="16" height="13.4" viewBox="0 0 16 13"><rect x="0.6" y="0.6" width="14.8" height="11.8" rx="1.8" fill="none" stroke="#444" stroke-width="1.2"/><g stroke="#444" stroke-width="1.5"><path d="M3 3.8h1.4M5.6 3.8h7.4M3 6.5h1.4M5.6 6.5h7.4M3 9.2h1.4M5.6 9.2h7.4"/></g></svg>
<svg class="b" style="left:423.40px;top:642.90px;" width="14.8" height="14.8" viewBox="0 0 16 16"><circle cx="8" cy="8" r="7.2" fill="none" stroke="#222" stroke-width="1.1"/><circle cx="8" cy="4.9" r="0.9" fill="#222"/><path d="M8 7v4.6" stroke="#222" stroke-width="1.5"/></svg>
<div class="b " style="left:443.00px;top:645.00px;width:11.00px;height:11.00px;background:#029a80;"></div>
<div class="b " style="left:458.00px;top:645.00px;width:11.00px;height:11.00px;background:#ff9900;"></div>
<span class="t" style="left:472.60px;top:641px;font-size:12.6px;line-height:18px;height:18px;color:#263238;transform:scaleY(1.08);transform-origin:0 13px;">daily_column_count_changed</span>
<span class="t" style="left:472.60px;top:655px;font-size:9.9px;line-height:15px;height:15px;color:#263238;transform:scaleY(1.12);transform-origin:0 11px;">Consistency</span>
<div class="b " style="left:1102.00px;top:636.00px;width:102.00px;height:29.00px;background:#ebe51e;border-radius:6.5px;"></div>
<span class="t" style="left:1116.75px;top:642px;font-size:12.6px;line-height:18px;height:18px;color:#fff;letter-spacing:0.012px;transform:scaleY(1.08);transform-origin:0 13px;-webkit-text-stroke:0.3px #fff;">Add Warning</span>
<div class="b " style="left:1615.20px;top:636.00px;width:82.00px;height:29.00px;background:#e3170a;border-radius:6.5px;"></div>
<span class="t" style="left:1628.90px;top:642px;font-size:12.6px;line-height:18px;height:18px;color:#fff;letter-spacing:0.074px;transform:scaleY(1.08);transform-origin:0 13px;-webkit-text-stroke:0.3px #fff;">Add Fatal</span>
<svg class="b" style="left:1367.00px;top:639.50px;" width="22" height="22" viewBox="0 0 22 22"><circle cx="11" cy="11" r="11" fill="#ff9900"/><path d="M7.3 7.3l7.4 7.4M14.7 7.3l-7.4 7.4" stroke="#fff" stroke-width="1.5" fill="none"/></svg>
<span class="t" style="left:1396.80px;top:642px;font-size:12.6px;line-height:18px;height:18px;color:#263238;font-weight:700;letter-spacing:0.784px;transform:scaleY(1.08);transform-origin:0 13px;">Enabled</span>
<div class="b " style="left:271.00px;top:683.00px;width:1494.00px;height:1.00px;background:#e2e3e6;"></div>
<div class="b " style="left:1033.00px;top:684.00px;width:222.00px;height:64.00px;background:#fdfdea;"></div>
<div class="b " style="left:1273.00px;top:684.00px;width:274.00px;height:64.00px;background:#ffefd6;"></div>
<div class="b " style="left:1547.00px;top:684.00px;width:218.40px;height:64.00px;background:#feeceb;"></div>
<div class="b " style="left:284.80px;top:709.30px;width:25.20px;height:13.60px;background:#029a80;border-radius:7px;"></div>
<div class="b " style="left:297.70px;top:710.70px;width:10.80px;height:10.80px;background:#fff;border-radius:50%;"></div>
<svg class="b" style="left:314.90px;top:708.00px;" width="16" height="16" viewBox="0 0 16 16"><circle cx="8" cy="8" r="6.8" fill="none" stroke="#222" stroke-width="1.6"/><rect x="5.8" y="5.8" width="4.4" height="4.4" fill="#222"/></svg>
<svg class="b" style="left:336.00px;top:708.00px;" width="16" height="16" viewBox="-8 -8 16 16"><g fill="#262626" stroke="#262626" stroke-width="0.9" stroke-linejoin="round"><rect x="-4.7" y="-4.7" width="9.4" height="9.4"/><rect x="-4.7" y="-4.7" width="9.4" height="9.4" transform="rotate(45)"/></g><circle cx="0" cy="0" r="2.9" fill="#fff"/></svg>
<svg class="b" style="left:357.50px;top:707.30px;" width="16.8" height="16.8" viewBox="0 0 18 18"><circle cx="9" cy="9" r="7.9" fill="none" stroke="#222" stroke-width="1.5"/><path d="M9 4.4V9.3l3 1.8" fill="none" stroke="#222" stroke-width="1.5"/></svg>
<svg class="b" style="left:378.70px;top:706.80px;" width="18.2" height="18.2" viewBox="0 0 18 18"><circle cx="9" cy="9" r="8.3" fill="none" stroke="#029a80" stroke-width="1.2"/><path d="M7 5.6v6.8L12.2 9z" fill="#029a80"/></svg>
<svg class="b" style="left:401.10px;top:708.70px;" width="16" height="13.4" viewBox="0 0 16 13"><rect x="0.6" y="0.6" width="14.8" height="11.8" rx="1.8" fill="none" stroke="#444" stroke-width="1.2"/><g stroke="#444" stroke-width="1.5"><path d="M3 3.8h1.4M5.6 3.8h7.4M3 6.5h1.4M5.6 6.5h7.4M3 9.2h1.4M5.6 9.2h7.4"/></g></svg>
<svg class="b" style="left:423.40px;top:707.90px;" width="14.8" height="14.8" viewBox="0 0 16 16"><circle cx="8" cy="8" r="7.2" fill="none" stroke="#222" stroke-width="1.1"/><circle cx="8" cy="4.9" r="0.9" fill="#222"/><path d="M8 7v4.6" stroke="#222" stroke-width="1.5"/></svg>
<div class="b " style="left:443.00px;top:710.00px;width:11.00px;height:11.00px;background:#029a80;"></div>
<div class="b " style="left:458.00px;top:710.00px;width:11.00px;height:11.00px;background:#ff9900;"></div>
<span class="t" style="left:472.60px;top:707px;font-size:12.6px;line-height:18px;height:18px;color:#263238;transform:scaleY(1.08);transform-origin:0 13px;">daily_column_list_changed</span>
<span class="t" style="left:472.60px;top:720px;font-size:9.9px;line-height:15px;height:15px;color:#263238;transform:scaleY(1.12);transform-origin:0 11px;">Consistency</span>
<div class="b " style="left:1102.00px;top:701.00px;width:102.00px;height:29.00px;background:#ebe51e;border-radius:6.5px;"></div>
<span class="t" style="left:1116.75px;top:707px;font-size:12.6px;line-height:18px;height:18px;color:#fff;letter-spacing:0.012px;transform:scaleY(1.08);transform-origin:0 13px;-webkit-text-stroke:0.3px #fff;">Add Warning</span>
<div class="b " style="left:1615.20px;top:701.00px;width:82.00px;height:29.00px;background:#e3170a;border-radius:6.5px;"></div>
<span class="t" style="left:1628.90px;top:707px;font-size:12.6px;line-height:18px;height:18px;color:#fff;letter-spacing:0.074px;transform:scaleY(1.08);transform-origin:0 13px;-webkit-text-stroke:0.3px #fff;">Add Fatal</span>
<svg class="b" style="left:1367.00px;top:704.50px;" width="22" height="22" viewBox="0 0 22 22"><circle cx="11" cy="11" r="11" fill="#ff9900"/><path d="M7.3 7.3l7.4 7.4M14.7 7.3l-7.4 7.4" stroke="#fff" stroke-width="1.5" fill="none"/></svg>
<span class="t" style="left:1396.80px;top:707px;font-size:12.6px;line-height:18px;height:18px;color:#263238;font-weight:700;letter-spacing:0.784px;transform:scaleY(1.08);transform-origin:0 13px;">Enabled</span>
<div class="b " style="left:271.00px;top:748.00px;width:1494.00px;height:1.00px;background:#e2e3e6;"></div>
<div class="b " style="left:1033.00px;top:749.00px;width:222.00px;height:63.00px;background:#fdfdea;"></div>
<div class="b " style="left:1273.00px;top:749.00px;width:274.00px;height:63.00px;background:#ffefd6;"></div>
<div class="b " style="left:1547.00px;top:749.00px;width:218.40px;height:63.00px;background:#feeceb;"></div>
<div class="b " style="left:284.80px;top:774.30px;width:25.20px;height:13.60px;background:#029a80;border-radius:7px;"></div>
<div class="b " style="left:297.70px;top:775.70px;width:10.80px;height:10.80px;background:#fff;border-radius:50%;"></div>
<svg class="b" style="left:314.90px;top:773.00px;" width="16" height="16" viewBox="0 0 16 16"><circle cx="8" cy="8" r="6.8" fill="none" stroke="#222" stroke-width="1.6"/><rect x="5.8" y="5.8" width="4.4" height="4.4" fill="#222"/></svg>
<svg class="b" style="left:336.00px;top:773.00px;" width="16" height="16" viewBox="-8 -8 16 16"><g fill="#262626" stroke="#262626" stroke-width="0.9" stroke-linejoin="round"><rect x="-4.7" y="-4.7" width="9.4" height="9.4"/><rect x="-4.7" y="-4.7" width="9.4" height="9.4" transform="rotate(45)"/></g><circle cx="0" cy="0" r="2.9" fill="#fff"/></svg>
<svg class="b" style="left:357.50px;top:772.30px;" width="16.8" height="16.8" viewBox="0 0 18 18"><circle cx="9" cy="9" r="7.9" fill="none" stroke="#222" stroke-width="1.5"/><path d="M9 4.4V9.3l3 1.8" fill="none" stroke="#222" stroke-width="1.5"/></svg>
<svg class="b" style="left:378.70px;top:771.80px;" width="18.2" height="18.2" viewBox="0 0 18 18"><circle cx="9" cy="9" r="8.3" fill="none" stroke="#029a80" stroke-width="1.2"/><path d="M7 5.6v6.8L12.2 9z" fill="#029a80"/></svg>
<svg class="b" style="left:401.10px;top:773.70px;" width="16" height="13.4" viewBox="0 0 16 13"><rect x="0.6" y="0.6" width="14.8" height="11.8" rx="1.8" fill="none" stroke="#444" stroke-width="1.2"/><g stroke="#444" stroke-width="1.5"><path d="M3 3.8h1.4M5.6 3.8h7.4M3 6.5h1.4M5.6 6.5h7.4M3 9.2h1.4M5.6 9.2h7.4"/></g></svg>
<svg class="b" style="left:423.40px;top:772.90px;" width="14.8" height="14.8" viewBox="0 0 16 16"><circle cx="8" cy="8" r="7.2" fill="none" stroke="#222" stroke-width="1.1"/><circle cx="8" cy="4.9" r="0.9" fill="#222"/><path d="M8 7v4.6" stroke="#222" stroke-width="1.5"/></svg>
<div class="b " style="left:443.00px;top:775.00px;width:11.00px;height:11.00px;background:#029a80;"></div>
<div class="b " style="left:458.00px;top:775.00px;width:11.00px;height:11.00px;background:#ff9900;"></div>
<span class="t" style="left:472.60px;top:771px;font-size:12.6px;line-height:18px;height:18px;color:#263238;transform:scaleY(1.08);transform-origin:0 13px;">daily_column_list_or_order_changed</span>
<span class="t" style="left:472.60px;top:785px;font-size:9.9px;line-height:15px;height:15px;color:#263238;transform:scaleY(1.12);transform-origin:0 11px;">Consistency</span>
<div class="b " style="left:1102.00px;top:766.00px;width:102.00px;height:29.00px;background:#ebe51e;border-radius:6.5px;"></div>
<span class="t" style="left:1116.75px;top:772px;font-size:12.6px;line-height:18px;height:18px;color:#fff;letter-spacing:0.012px;transform:scaleY(1.08);transform-origin:0 13px;-webkit-text-stroke:0.3px #fff;">Add Warning</span>
<div class="b " style="left:1615.20px;top:766.00px;width:82.00px;height:29.00px;background:#e3170a;border-radius:6.5px;"></div>
<span class="t" style="left:1628.90px;top:772px;font-size:12.6px;line-height:18px;height:18px;color:#fff;letter-spacing:0.074px;transform:scaleY(1.08);transform-origin:0 13px;-webkit-text-stroke:0.3px #fff;">Add Fatal</span>
<svg class="b" style="left:1367.00px;top:769.50px;" width="22" height="22" viewBox="0 0 22 22"><circle cx="11" cy="11" r="11" fill="#ff9900"/><path d="M7.3 7.3l7.4 7.4M14.7 7.3l-7.4 7.4" stroke="#fff" stroke-width="1.5" fill="none"/></svg>
<span class="t" style="left:1396.80px;top:772px;font-size:12.6px;line-height:18px;height:18px;color:#263238;font-weight:700;letter-spacing:0.784px;transform:scaleY(1.08);transform-origin:0 13px;">Enabled</span>
<div class="b " style="left:271.00px;top:812.00px;width:1494.00px;height:1.00px;background:#e2e3e6;"></div>
<div class="b " style="left:1033.00px;top:813.00px;width:222.00px;height:64.00px;background:#fdfdea;"></div>
<div class="b " style="left:1273.00px;top:813.00px;width:274.00px;height:64.00px;background:#ffefd6;"></div>
<div class="b " style="left:1547.00px;top:813.00px;width:218.40px;height:64.00px;background:#feeceb;"></div>
<div class="b " style="left:284.80px;top:839.30px;width:25.20px;height:13.60px;background:#029a80;border-radius:7px;"></div>
<div class="b " style="left:297.70px;top:840.70px;width:10.80px;height:10.80px;background:#fff;border-radius:50%;"></div>
<svg class="b" style="left:314.90px;top:838.00px;" width="16" height="16" viewBox="0 0 16 16"><circle cx="8" cy="8" r="6.8" fill="none" stroke="#222" stroke-width="1.6"/><rect x="5.8" y="5.8" width="4.4" height="4.4" fill="#222"/></svg>
<svg class="b" style="left:336.00px;top:838.00px;" width="16" height="16" viewBox="-8 -8 16 16"><g fill="#262626" stroke="#262626" stroke-width="0.9" stroke-linejoin="round"><rect x="-4.7" y="-4.7" width="9.4" height="9.4"/><rect x="-4.7" y="-4.7" width="9.4" height="9.4" transform="rotate(45)"/></g><circle cx="0" cy="0" r="2.9" fill="#fff"/></svg>
<svg class="b" style="left:357.50px;top:837.30px;" width="16.8" height="16.8" viewBox="0 0 18 18"><circle cx="9" cy="9" r="7.9" fill="none" stroke="#222" stroke-width="1.5"/><path d="M9 4.4V9.3l3 1.8" fill="none" stroke="#222" stroke-width="1.5"/></svg>
<svg class="b" style="left:378.70px;top:836.80px;" width="18.2" height="18.2" viewBox="0 0 18 18"><circle cx="9" cy="9" r="8.3" fill="none" stroke="#029a80" stroke-width="1.2"/><path d="M7 5.6v6.8L12.2 9z" fill="#029a80"/></svg>
<svg class="b" style="left:401.10px;top:838.70px;" width="16" height="13.4" viewBox="0 0 16 13"><rect x="0.6" y="0.6" width="14.8" height="11.8" rx="1.8" fill="none" stroke="#444" stroke-width="1.2"/><g stroke="#444" stroke-width="1.5"><path d="M3 3.8h1.4M5.6 3.8h7.4M3 6.5h1.4M5.6 6.5h7.4M3 9.2h1.4M5.6 9.2h7.4"/></g></svg>
<svg class="b" style="left:423.40px;top:837.90px;" width="14.8" height="14.8" viewBox="0 0 16 16"><circle cx="8" cy="8" r="7.2" fill="none" stroke="#222" stroke-width="1.1"/><circle cx="8" cy="4.9" r="0.9" fill="#222"/><path d="M8 7v4.6" stroke="#222" stroke-width="1.5"/></svg>
<div class="b " style="left:443.00px;top:840.00px;width:11.00px;height:11.00px;background:#029a80;"></div>
<div class="b " style="left:458.00px;top:840.00px;width:11.00px;height:11.00px;background:#ff9900;"></div>
<span class="t" style="left:472.60px;top:836px;font-size:12.6px;line-height:18px;height:18px;color:#263238;transform:scaleY(1.08);transform-origin:0 13px;">daily_column_types_changed</span>
<span class="t" style="left:472.60px;top:850px;font-size:9.9px;line-height:15px;height:15px;color:#263238;transform:scaleY(1.12);transform-origin:0 11px;">Consistency</span>
<div class="b " style="left:1102.00px;top:831.00px;width:102.00px;height:29.00px;background:#ebe51e;border-radius:6.5px;"></div>
<span class="t" style="left:1116.75px;top:837px;font-size:12.6px;line-height:18px;height:18px;color:#fff;letter-spacing:0.012px;transform:scaleY(1.08);transform-origin:0 13px;-webkit-text-stroke:0.3px #fff;">Add Warning</span>
<div class="b " style="left:1615.20px;top:831.00px;width:82.00px;height:29.00px;background:#e3170a;border-radius:6.5px;"></div>
<span class="t" style="left:1628.90px;top:837px;font-size:12.6px;line-height:18px;height:18px;color:#fff;letter-spacing:0.074px;transform:scaleY(1.08);transform-origin:0 13px;-webkit-text-stroke:0.3px #fff;">Add Fatal</span>
<svg class="b" style="left:1367.00px;top:834.50px;" width="22" height="22" viewBox="0 0 22 22"><circle cx="11" cy="11" r="11" fill="#ff9900"/><path d="M7.3 7.3l7.4 7.4M14.7 7.3l-7.4 7.4" stroke="#fff" stroke-width="1.5" fill="none"/></svg>
<span class="t" style="left:1396.80px;top:837px;font-size:12.6px;line-height:18px;height:18px;color:#263238;font-weight:700;letter-spacing:0.784px;transform:scaleY(1.08);transform-origin:0 13px;">Enabled</span>
<div class="b " style="left:271.00px;top:877.00px;width:1494.00px;height:1.00px;background:#e2e3e6;"></div>
<div class="b " style="left:271.00px;top:262.00px;width:1494.00px;height:1.00px;background:#959cab;"></div>
<div class="b " style="left:271.00px;top:343.00px;width:1472.00px;height:259.60px;background:#fff;border:1px solid #959cab;"></div>
<span class="t" style="left:315.80px;top:371px;font-size:12.6px;line-height:18px;height:18px;color:#263238;font-weight:700;letter-spacing:-0.018px;transform:scaleY(1.08);transform-origin:0 13px;">Check results</span>
<div class="b " style="left:287.00px;top:394.00px;width:140.00px;height:1.00px;background:#029a80;"></div>
<span class="t" style="left:456.30px;top:371px;font-size:12.6px;line-height:18px;height:18px;color:#2a363c;letter-spacing:-0.037px;transform:scaleY(1.08);transform-origin:0 13px;">Sensor readouts</span>
<span class="t" style="left:606.30px;top:371px;font-size:12.6px;line-height:18px;height:18px;color:#2a363c;letter-spacing:-0.034px;transform:scaleY(1.08);transform-origin:0 13px;">Execution errors</span>
<div class="b " style="left:1648.00px;top:358.00px;width:35.60px;height:35.60px;background:#f3f4f5;border-radius:50%;"></div>
<svg class="b" style="left:1658.00px;top:368.00px;" width="16" height="16" viewBox="0 0 16 16"><g fill="none" stroke="#222" stroke-width="1.35"><path d="M0 3.3h16"/><path d="M5.3 3.1V0.9h5.4v2.2"/><path d="M2.4 3.5l1.2 11.7h8.8l1.2-11.7"/></g></svg>
<div class="b " style="left:1692.00px;top:358.00px;width:36.00px;height:36.00px;background:#f3f4f5;border-radius:50%;"></div>
<svg class="b" style="left:1704.40px;top:371.50px;" width="9.6" height="9.6" viewBox="0 0 10 10"><path d="M1 1l8 8M9 1l-8 8" stroke="#222" stroke-width="1.3" fill="none"/></svg>
<span class="t" style="left:286.90px;top:420px;font-size:12.6px;line-height:18px;height:18px;color:#263238;transform:scaleY(1.08);transform-origin:0 13px;">Data group (time series)</span>
<div class="b " style="left:436.20px;top:413.20px;width:119.40px;height:32.40px;background:#fff;border:1px solid #dfe2e6;border-radius:4px;"></div>
<span class="t" style="left:452.00px;top:420px;font-size:12.6px;line-height:18px;height:18px;color:#263238;letter-spacing:-0.032px;transform:scaleY(1.08);transform-origin:0 13px;">no grouping</span>
<svg class="b" style="left:535.80px;top:427.40px;" width="9" height="5.4" viewBox="0 0 9 5.4"><path d="M0.6 0.6L4.5 4.5L8.4 0.6" fill="none" stroke="#333" stroke-width="1.1"/></svg>
<span class="t" style="left:584.40px;top:420px;font-size:12.6px;line-height:18px;height:18px;color:#263238;letter-spacing:-0.084px;transform:scaleY(1.08);transform-origin:0 13px;">Month</span>
<div class="b " style="left:634.10px;top:413.20px;width:130.60px;height:32.40px;background:#fff;border:1px solid #dfe2e6;border-radius:4px;"></div>
<span class="t" style="left:649.20px;top:420px;font-size:12.6px;line-height:18px;height:18px;color:#263238;letter-spacing:-0.050px;transform:scaleY(1.08);transform-origin:0 13px;">Last 3 months</span>
<svg class="b" style="left:745.30px;top:427.40px;" width="9" height="5.4" viewBox="0 0 9 5.4"><path d="M0.6 0.6L4.5 4.5L8.4 0.6" fill="none" stroke="#333" stroke-width="1.1"/></svg>
<div class="b " style="left:794.00px;top:415.00px;width:28.80px;height:29.20px;background:#029a80;border-radius:7.5px;box-shadow:0 2px 3px rgba(2,154,128,.14);"></div>
<svg class="b" style="left:801.40px;top:424.00px;" width="14" height="11.6" viewBox="0 0 15 12"><g fill="none" stroke="#fff"><rect x="0.6" y="0.6" width="13.8" height="10.8" stroke-width="1.2"/><path d="M0.6 1.6h13.8" stroke-width="2"/><path d="M0.6 5h13.8M0.6 8.2h13.8M5.2 2v9.4M9.8 2v9.4" stroke-width="1" opacity="0.62"/></g></svg>
<div class="b " style="left:836.90px;top:415.00px;width:28.80px;height:29.20px;background:#fff;border:1px solid #029a80;border-radius:7.5px;box-shadow:0 2px 3px rgba(2,154,128,.10);"></div>
<svg class="b" style="left:844.00px;top:423.00px;" width="15" height="13" viewBox="0 0 15 13"><g fill="none" stroke="#029a80" stroke-width="1.4" stroke-linecap="round" stroke-linejoin="round"><path d="M1.4 0.9v11h12.8"/><path d="M4 8l2.8-3.2 2.6 2 3.8-4"/></g></svg>
<span class="t" style="left:301.40px;top:473px;font-size:12.6px;line-height:18px;height:18px;color:#263238;font-weight:700;transform:scaleY(1.08);transform-origin:0 13px;">Checkpoint date</span>
<span class="t" style="left:447.50px;top:473px;font-size:12.6px;line-height:18px;height:18px;color:#263238;font-weight:700;letter-spacing:-0.031px;transform:scaleY(1.08);transform-origin:0 13px;">Time Scale</span>
<span class="t" style="left:541.80px;top:473px;font-size:12.6px;line-height:18px;height:18px;color:#263238;font-weight:700;letter-spacing:-0.014px;transform:scaleY(1.08);transform-origin:0 13px;">Executed At</span>
<span class="t" style="left:687.50px;top:473px;font-size:12.6px;line-height:18px;height:18px;color:#263238;font-weight:700;letter-spacing:-0.019px;transform:scaleY(1.08);transform-origin:0 13px;">Actual Value</span>
<span class="t" style="left:791.60px;top:473px;font-size:12.6px;line-height:18px;height:18px;color:#263238;font-weight:700;letter-spacing:-0.046px;transform:scaleY(1.08);transform-origin:0 13px;">Expected Value</span>
<span class="t" style="left:912.40px;top:473px;font-size:12.6px;line-height:18px;height:18px;color:#263238;font-weight:700;letter-spacing:0.006px;transform:scaleY(1.08);transform-origin:0 13px;">Issue Severity Level</span>
<span class="t" style="left:1112.87px;top:465px;font-size:12.6px;line-height:18px;height:18px;color:#263238;font-weight:700;transform:scaleY(1.08);transform-origin:0 13px;">Warning</span>
<span class="t" style="left:1061.80px;top:480px;font-size:12.6px;line-height:18px;height:18px;color:#263238;font-weight:700;letter-spacing:-0.034px;transform:scaleY(1.08);transform-origin:0 13px;">Lower Threshold</span>
<span class="t" style="left:1242.57px;top:465px;font-size:12.6px;line-height:18px;height:18px;color:#263238;font-weight:700;transform:scaleY(1.08);transform-origin:0 13px;">Warning</span>
<span class="t" style="left:1191.50px;top:480px;font-size:12.6px;line-height:18px;height:18px;color:#263238;font-weight:700;letter-spacing:0.013px;transform:scaleY(1.08);transform-origin:0 13px;">Upper Threshold</span>
<span class="t" style="left:1391.99px;top:465px;font-size:12.6px;line-height:18px;height:18px;color:#263238;font-weight:700;transform:scaleY(1.08);transform-origin:0 13px;">Error</span>
<span class="t" style="left:1321.80px;top:480px;font-size:12.6px;line-height:18px;height:18px;color:#263238;font-weight:700;letter-spacing:-0.034px;transform:scaleY(1.08);transform-origin:0 13px;">Lower Threshold</span>
<span class="t" style="left:1521.89px;top:465px;font-size:12.6px;line-height:18px;height:18px;color:#263238;font-weight:700;transform:scaleY(1.08);transform-origin:0 13px;">Error</span>
<span class="t" style="left:1451.70px;top:480px;font-size:12.6px;line-height:18px;height:18px;color:#263238;font-weight:700;letter-spacing:0.013px;transform:scaleY(1.08);transform-origin:0 13px;">Upper Threshold</span>
<span class="t" style="left:1653.39px;top:465px;font-size:12.6px;line-height:18px;height:18px;color:#263238;font-weight:700;transform:scaleY(1.08);transform-origin:0 13px;">Fatal</span>
<span class="t" style="left:1581.80px;top:480px;font-size:12.6px;line-height:18px;height:18px;color:#263238;font-weight:700;letter-spacing:-0.034px;transform:scaleY(1.08);transform-origin:0 13px;">Lower Threshold</span>
<span class="t" style="left:1712.00px;top:480px;font-size:12.6px;line-height:18px;height:18px;color:#263238;font-weight:700;transform:scaleY(1.08);transform-origin:0 13px;">Up</span>
<div class="b " style="left:287.00px;top:503.30px;width:1441.00px;height:29.30px;background:#ffefd6;border-bottom:1px solid #b8bcc2;"></div>
<span class="t" style="left:301.40px;top:509px;font-size:12.6px;line-height:18px;height:18px;color:#263238;letter-spacing:-0.032px;transform:scaleY(1.08);transform-origin:0 13px;">2023-12-20 00:00:00</span>
<span class="t" style="left:447.50px;top:509px;font-size:12.6px;line-height:18px;height:18px;color:#263238;transform:scaleY(1.08);transform-origin:0 13px;">day</span>
<span class="t" style="left:541.80px;top:509px;font-size:12.6px;line-height:18px;height:18px;color:#263238;letter-spacing:-0.011px;transform:scaleY(1.08);transform-origin:0 13px;">2023-12-20 09:42:46</span>
<span class="t" style="left:755.19px;top:509px;font-size:12.6px;line-height:18px;height:18px;color:#263238;transform:scaleY(1.08);transform-origin:0 13px;">4</span>
<span class="t" style="left:876.39px;top:509px;font-size:12.6px;line-height:18px;height:18px;color:#263238;transform:scaleY(1.08);transform-origin:0 13px;">5</span>
<span class="t" style="left:1005.00px;top:509px;font-size:12.6px;line-height:18px;height:18px;color:#263238;transform:scaleY(1.08);transform-origin:0 13px;">Error</span>
<span class="t" style="left:1415.79px;top:509px;font-size:12.6px;line-height:18px;height:18px;color:#263238;transform:scaleY(1.08);transform-origin:0 13px;">5</span>
<span class="t" style="left:1545.69px;top:509px;font-size:12.6px;line-height:18px;height:18px;color:#263238;transform:scaleY(1.08);transform-origin:0 13px;">5</span>
<span class="t" style="left:301.40px;top:538px;font-size:12.6px;line-height:18px;height:18px;color:#263238;letter-spacing:-0.032px;transform:scaleY(1.08);transform-origin:0 13px;">2023-12-19 00:00:00</span>
<span class="t" style="left:447.50px;top:538px;font-size:12.6px;line-height:18px;height:18px;color:#263238;transform:scaleY(1.08);transform-origin:0 13px;">day</span>
<span class="t" style="left:541.80px;top:538px;font-size:12.6px;line-height:18px;height:18px;color:#263238;letter-spacing:-0.011px;transform:scaleY(1.08);transform-origin:0 13px;">2023-12-19 16:50:59</span>
<span class="t" style="left:755.19px;top:538px;font-size:12.6px;line-height:18px;height:18px;color:#263238;transform:scaleY(1.08);transform-origin:0 13px;">5</span>
<span class="t" style="left:876.39px;top:538px;font-size:12.6px;line-height:18px;height:18px;color:#263238;transform:scaleY(1.08);transform-origin:0 13px;">5</span>
<span class="t" style="left:985.38px;top:538px;font-size:12.6px;line-height:18px;height:18px;color:#263238;transform:scaleY(1.08);transform-origin:0 13px;">Success</span>
<span class="t" style="left:1415.79px;top:538px;font-size:12.6px;line-height:18px;height:18px;color:#263238;transform:scaleY(1.08);transform-origin:0 13px;">5</span>
<span class="t" style="left:1545.69px;top:538px;font-size:12.6px;line-height:18px;height:18px;color:#263238;transform:scaleY(1.08);transform-origin:0 13px;">5</span>
<div class="b " style="left:287.00px;top:573.00px;width:1441.00px;height:8.00px;background:#e1e4e9;border-radius:4px;"></div>
<div class="b " style="left:287.00px;top:573.00px;width:933.00px;height:8.00px;background:#9ca3af;border-radius:4px;"></div>
</main>
</body></html>
